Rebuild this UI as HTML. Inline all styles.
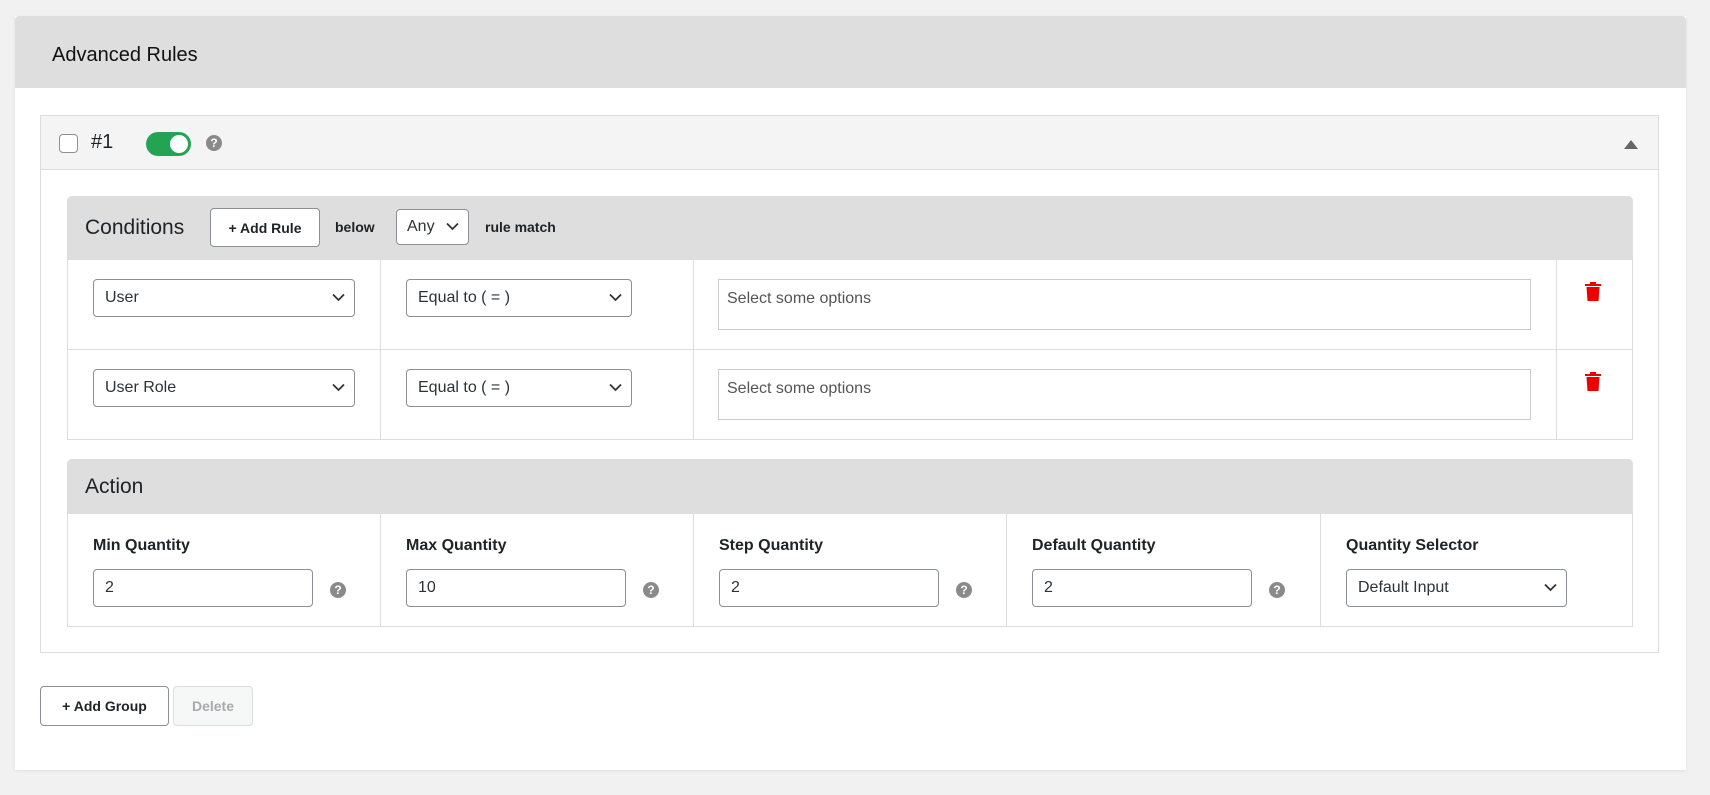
<!DOCTYPE html>
<html><head><style>
*{box-sizing:border-box;margin:0;padding:0}
body{width:1710px;height:795px;background:#f1f1f1;font-family:"Liberation Sans",sans-serif;color:#1d2327;position:relative;overflow:hidden}
.abs{position:absolute}
.panel{left:15px;top:16px;width:1671px;height:754px;background:#fff;box-shadow:0 1px 3px rgba(0,0,0,.08)}
.ph{left:15px;top:16px;width:1671px;height:72px;background:#dedede;border-radius:4px 4px 0 0}
.box{border:1px solid #ddd}
.sel{border:1px solid #8c8f94;border-radius:4px;background:#fff;font-size:16px;padding-left:11px;display:flex;align-items:center;color:#2c3338}
.sel svg{position:absolute;right:9px;top:50%;margin-top:-5px}
.inp{border:1px solid #8c8f94;border-radius:4px;background:#fff;font-size:16px;padding-left:11px;display:flex;align-items:center;color:#2c3338}
.help{width:16px;height:16px;border-radius:50%;background:#8a8a8a;color:#fff;font-size:12px;font-weight:bold;text-align:center;line-height:16px}
.lbl{font-size:16px;font-weight:bold}
.vl{width:1px;background:#ddd}
.hl{height:1px;background:#ddd}
</style></head><body>
<div class="abs panel"></div>
<div class="abs ph"></div>
<div class="abs" style="left:52px;top:44px;font-size:20px;color:#111">Advanced Rules</div>

<div class="abs box" style="left:40px;top:115px;width:1619px;height:538px;background:#fff"></div>
<div class="abs" style="left:41px;top:116px;width:1617px;height:54px;background:#f4f4f4;border-bottom:1px solid #ddd"></div>
<div class="abs" style="left:59px;top:134px;width:19px;height:19px;border:1px solid #8c8f94;border-radius:4px;background:#fff"></div>
<div class="abs" style="left:91px;top:131px;font-size:20px">#1</div>
<div class="abs" style="left:146px;top:132px;width:45px;height:24px;border-radius:12px;background:#23a455"></div>
<div class="abs" style="left:170px;top:135px;width:18px;height:18px;border-radius:50%;background:#fff"></div>
<div class="abs help" style="left:206px;top:135px">?</div>
<svg class="abs" style="left:1623px;top:138px" width="16" height="12"><path d="M1 11 L8 2 L15 11Z" fill="#666"/></svg>

<div class="abs box" style="left:67px;top:196px;width:1566px;height:244px;border-radius:5px 5px 0 0"></div>
<div class="abs" style="left:67px;top:196px;width:1566px;height:64px;background:#dedede;border-radius:5px 5px 0 0"></div>
<div class="abs" style="left:85px;top:216px;font-size:21px">Conditions</div>
<div class="abs" style="left:210px;top:208px;width:110px;height:39px;border:1px solid #8c8f94;border-radius:4px;background:#fff;font-size:14px;font-weight:bold;display:flex;align-items:center;justify-content:center">+ Add Rule</div>
<div class="abs" style="left:335px;top:219px;font-size:14px;font-weight:bold">below</div>
<div class="abs sel" style="left:396px;top:209px;width:73px;height:36px;padding-left:10px;font-size:16px">Any<svg width="13" height="9"><path d="M1 1.5 L6.5 7 L12 1.5" stroke="#333" stroke-width="1.8" fill="none"/></svg></div>
<div class="abs" style="left:485px;top:219px;font-size:14px;font-weight:bold">rule match</div>
<div class="abs hl" style="left:67px;top:349px;width:1566px"></div>
<div class="abs vl" style="left:380px;top:260px;height:180px"></div>
<div class="abs vl" style="left:693px;top:260px;height:180px"></div>
<div class="abs vl" style="left:1556px;top:260px;height:180px"></div>

<div class="abs sel" style="left:93px;top:279px;width:262px;height:38px">User<svg width="13" height="9"><path d="M1 1.5 L6.5 7 L12 1.5" stroke="#333" stroke-width="1.8" fill="none"/></svg></div>
<div class="abs sel" style="left:406px;top:279px;width:226px;height:38px">Equal to ( = )<svg width="13" height="9"><path d="M1 1.5 L6.5 7 L12 1.5" stroke="#333" stroke-width="1.8" fill="none"/></svg></div>
<div class="abs" style="left:718px;top:279px;width:813px;height:51px;border:1px solid #ccc;font-size:16px;color:#555;padding:10px 0 0 8px">Select some options</div>
<svg class="abs" style="left:1585px;top:282px" width="16" height="19" viewBox="0 0 16 19"><path d="M5 0h6v2h5v2H0V2h5z M1.5 5h13l-1 14h-11z" fill="#e00"/></svg>

<div class="abs sel" style="left:93px;top:369px;width:262px;height:38px">User Role<svg width="13" height="9"><path d="M1 1.5 L6.5 7 L12 1.5" stroke="#333" stroke-width="1.8" fill="none"/></svg></div>
<div class="abs sel" style="left:406px;top:369px;width:226px;height:38px">Equal to ( = )<svg width="13" height="9"><path d="M1 1.5 L6.5 7 L12 1.5" stroke="#333" stroke-width="1.8" fill="none"/></svg></div>
<div class="abs" style="left:718px;top:369px;width:813px;height:51px;border:1px solid #ccc;font-size:16px;color:#555;padding:10px 0 0 8px">Select some options</div>
<svg class="abs" style="left:1585px;top:372px" width="16" height="19" viewBox="0 0 16 19"><path d="M5 0h6v2h5v2H0V2h5z M1.5 5h13l-1 14h-11z" fill="#e00"/></svg>

<div class="abs box" style="left:67px;top:459px;width:1566px;height:168px;border-radius:5px 5px 0 0"></div>
<div class="abs" style="left:67px;top:459px;width:1566px;height:55px;background:#dedede;border-radius:5px 5px 0 0"></div>
<div class="abs" style="left:85px;top:475px;font-size:21px">Action</div>
<div class="abs vl" style="left:380px;top:514px;height:113px"></div>
<div class="abs vl" style="left:693px;top:514px;height:113px"></div>
<div class="abs vl" style="left:1006px;top:514px;height:113px"></div>
<div class="abs vl" style="left:1320px;top:514px;height:113px"></div>

<div class="abs lbl" style="left:93px;top:537px">Min Quantity</div>
<div class="abs inp" style="left:93px;top:569px;width:220px;height:38px">2</div>
<div class="abs help" style="left:330px;top:582px">?</div>
<div class="abs lbl" style="left:406px;top:537px">Max Quantity</div>
<div class="abs inp" style="left:406px;top:569px;width:220px;height:38px">10</div>
<div class="abs help" style="left:643px;top:582px">?</div>
<div class="abs lbl" style="left:719px;top:537px">Step Quantity</div>
<div class="abs inp" style="left:719px;top:569px;width:220px;height:38px">2</div>
<div class="abs help" style="left:956px;top:582px">?</div>
<div class="abs lbl" style="left:1032px;top:537px">Default Quantity</div>
<div class="abs inp" style="left:1032px;top:569px;width:220px;height:38px">2</div>
<div class="abs help" style="left:1269px;top:582px">?</div>
<div class="abs lbl" style="left:1346px;top:537px">Quantity Selector</div>
<div class="abs sel" style="left:1346px;top:569px;width:221px;height:38px">Default Input<svg width="13" height="9"><path d="M1 1.5 L6.5 7 L12 1.5" stroke="#333" stroke-width="1.8" fill="none"/></svg></div>

<div class="abs" style="left:40px;top:686px;width:129px;height:40px;border:1px solid #8c8f94;border-radius:4px;background:#fff;font-size:14px;font-weight:bold;display:flex;align-items:center;justify-content:center">+ Add Group</div>
<div class="abs" style="left:173px;top:686px;width:80px;height:40px;border:1px solid #ddd;border-radius:4px;background:#f6f7f7;font-size:14px;font-weight:bold;color:#a7aaad;display:flex;align-items:center;justify-content:center">Delete</div>
</body></html>
